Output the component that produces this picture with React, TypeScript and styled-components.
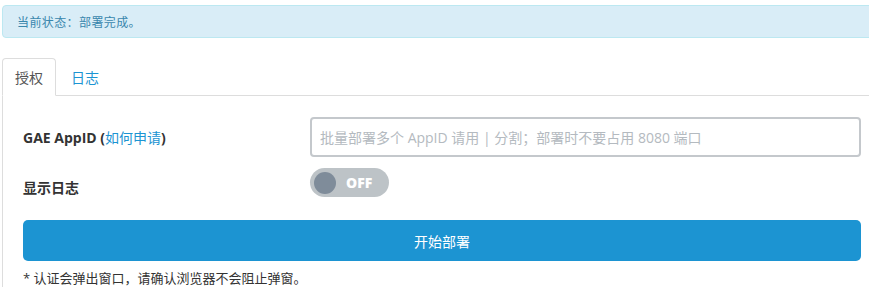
import { useState } from "react"
import styled, { createGlobalStyle } from "styled-components"

const GlobalStyle = createGlobalStyle`
  html, body {
    margin: 0;
    padding: 0;
    background: #fff;
    overflow: hidden;
  }
  body {
    font-family: "Open Sans", "Noto Sans CJK SC", "Liberation Sans", sans-serif;
    color: #333;
  }
`;

const Page = styled.div`
  width: 879px;
  padding: 5px 0 0 2px;
`;

const Alert = styled.div`
  height: 31px;
  display: flex;
  align-items: center;
  padding: 0 14px;
  font-size: 12px;
  letter-spacing: 0.4px;
  color: #3a87ad;
  background: #d9edf7;
  border: 1px solid #bce8f1;
  border-radius: 4px;
  margin-bottom: 20px;
`;

const TabBar = styled.ul`
  display: flex;
  list-style: none;
  margin: 0;
  padding: 0;
  border-bottom: 1px solid #ddd;
`;

const Tab = styled.li<{ $active?: boolean }>`
  height: 36px;
  display: flex;
  align-items: center;
  padding: 0 12px;
  margin-right: 2px;
  margin-bottom: -1px;
  font-size: 14px;
  cursor: pointer;
  color: ${p => (p.$active ? "#555" : "#1c94d2")};
  background: ${p => (p.$active ? "#fff" : "transparent")};
  border: 1px solid ${p => (p.$active ? "#ddd" : "transparent")};
  border-bottom-color: ${p => (p.$active ? "#fff" : "transparent")};
  border-radius: 4px 4px 0 0;
`;

const Panel = styled.div`
  border-left: 1px solid #ddd;
  padding: 21px 20px 0 20px;
`;

const FormRow = styled.div<{ $gap: number }>`
  display: grid;
  grid-template-columns: 287px 1fr;
  align-items: center;
  margin-bottom: ${p => p.$gap}px;
`;

const Label = styled.label<{ $shift?: number }>`
  font-size: 14px;
  font-weight: bold;
  color: #333;
  position: relative;
  top: ${p => p.$shift || 0}px;

  a {
    color: #1c94d2;
    font-weight: normal;
    text-decoration: none;
  }
`;

const TextInput = styled.input`
  box-sizing: border-box;
  height: 40px;
  width: 100%;
  padding: 0 8px;
  font-family: inherit;
  font-size: 14px;
  color: #333;
  border: 2px solid #c4c8cc;
  border-radius: 4px;
  outline: none;

  &::placeholder {
    color: #b4bac0;
  }
`;

const Switch = styled.button<{ $on: boolean }>`
  width: 79px;
  height: 29px;
  display: flex;
  align-items: center;
  gap: 10px;
  padding: 0 4px;
  border: none;
  border-radius: 15px;
  cursor: pointer;
  background: ${p => (p.$on ? "#1c94d2" : "#bdc3c7")};
  color: #fff;
  font-family: "Open Sans", "Liberation Sans", sans-serif;
  font-size: 14px;
  font-weight: 800;
`;

const Knob = styled.span`
  width: 22px;
  height: 22px;
  border-radius: 50%;
  background: #7f8c9a;
`;

const DeployButton = styled.button`
  display: block;
  width: 100%;
  height: 41px;
  border: none;
  border-radius: 5px;
  background: #1c94d2;
  color: #fff;
  font-family: inherit;
  font-size: 14px;
  cursor: pointer;
`;

const Note = styled.p`
  margin: 7px 0 0;
  font-size: 13px;
  color: #333;
`;

export default function App() {
  const [showLog, setShowLog] = useState(false);

  return (
    <Page>
      <GlobalStyle />
      <Alert>当前状态：部署完成。</Alert>
      <TabBar>
        <Tab $active>授权</Tab>
        <Tab>日志</Tab>
      </TabBar>
      <Panel>
        <FormRow $gap={11}>
          <Label>
            GAE AppID (<a href="#">如何申请</a>)
          </Label>
          <TextInput placeholder="批量部署多个 AppID 请用 | 分割；部署时不要占用 8080 端口" />
        </FormRow>
        <FormRow $gap={23}>
          <Label $shift={4}>显示日志</Label>
          <Switch $on={showLog} onClick={() => setShowLog(!showLog)}>
            <Knob />
            {showLog ? "ON" : "OFF"}
          </Switch>
        </FormRow>
        <DeployButton>开始部署</DeployButton>
        <Note>* 认证会弹出窗口，请确认浏览器不会阻止弹窗。</Note>
      </Panel>
    </Page>
  );
}
